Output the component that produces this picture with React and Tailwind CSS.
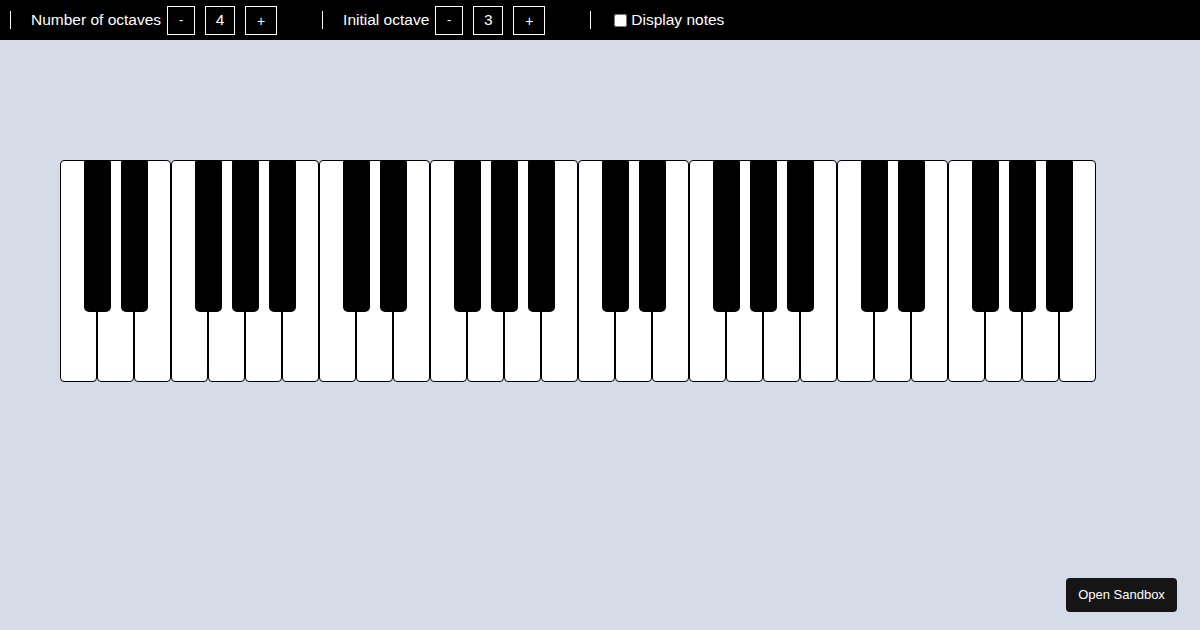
import { useState } from "react";

const BLACK_OFFSETS = [24, 61, 135, 172, 209];

function Stepper({ label, value }) {
  return (
    <div className="flex items-center">
      <span className="w-px h-[18px] bg-white" />
      <span className="ml-5 text-[15.5px]">{label}</span>
      <button className="ml-[6px] w-[28px] h-[29px] border border-white text-[13px] flex items-center justify-center">
        -
      </button>
      <span className="ml-[10px] w-[30px] h-[29px] border border-white text-[15.5px] flex items-center justify-center">
        {value}
      </span>
      <button className="ml-[10px] w-[32px] h-[29px] border border-white text-[14px] flex items-center justify-center pt-[2px]">
        +
      </button>
    </div>
  );
}

function Octave() {
  return (
    <div className="relative flex">
      {Array.from({ length: 7 }).map((_, i) => (
        <div
          key={i}
          className="w-[37px] h-[222px] bg-white border border-black rounded-[4px]"
        />
      ))}
      {BLACK_OFFSETS.map((left) => (
        <div
          key={left}
          className="absolute top-0 w-[27px] h-[152px] bg-black rounded-t-[2px] rounded-b-[5px]"
          style={{ left }}
        />
      ))}
    </div>
  );
}

export default function App() {
  const [showNotes, setShowNotes] = useState(false);
  return (
    <div
      className="min-h-screen bg-[#d5dce8]"
      style={{ fontFamily: '"Liberation Sans", Arial, sans-serif' }}
    >
      <div className="h-10 bg-black text-white flex items-center pl-[10px] gap-[45px]">
        <Stepper label="Number of octaves" value={4} />
        <Stepper label="Initial octave" value={3} />
        <div className="flex items-center">
          <span className="w-px h-[18px] bg-white" />
          <label className="ml-5 flex items-center text-[15.5px]">
            <input
              type="checkbox"
              checked={showNotes}
              onChange={() => setShowNotes(!showNotes)}
              className="ml-[3px] mr-[4px] w-[13px] h-[13px]"
            />
            Display notes
          </label>
        </div>
      </div>
      <div className="pt-[120px] pl-[60px] flex">
        {Array.from({ length: 4 }).map((_, i) => (
          <Octave key={i} />
        ))}
      </div>
      <button className="fixed bottom-[18px] right-[23px] w-[111px] h-[34px] bg-[#151515] text-white text-[13px] rounded-[4px] flex items-center justify-center">
        Open Sandbox
      </button>
    </div>
  );
}
